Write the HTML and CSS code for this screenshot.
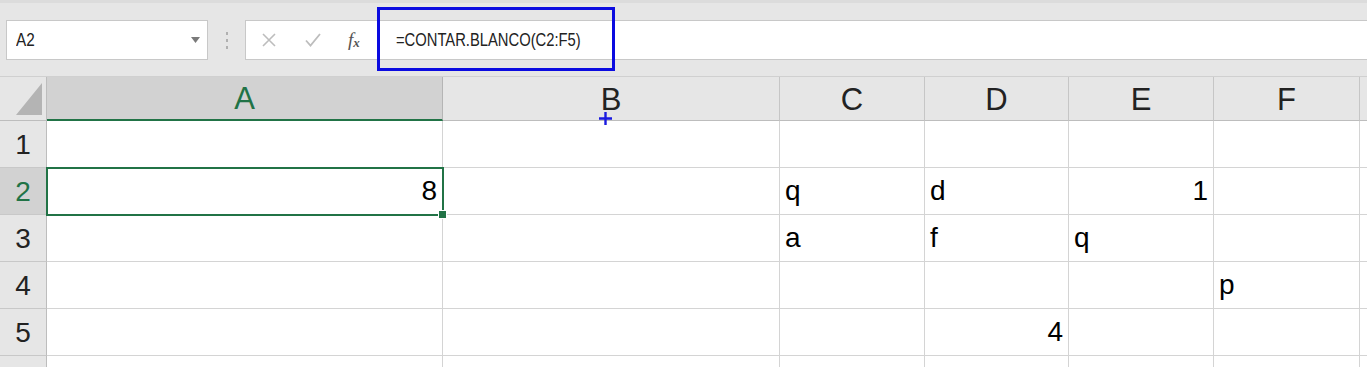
FILE: index.html
```html
<!DOCTYPE html>
<html>
<head>
<meta charset="utf-8">
<link rel="stylesheet" href="styles.css">
</head>
<body>
<div class="app">
  <div class="toolbar">
    <div class="namebox">
      <span class="name">A2</span>
      <svg class="dd" width="9" height="6" viewBox="0 0 9 6"><path d="M0 0H9L4.5 6Z" fill="#7a7a7a"/></svg>
    </div>
    <div class="dots"><i></i><i></i><i></i></div>
    <div class="fbar">
      <div class="ficons">
        <svg width="14" height="14" viewBox="0 0 14 14"><path d="M1 1L13 13M13 1L1 13" stroke="#bdbdbd" stroke-width="1.6" fill="none"/></svg>
        <svg width="16" height="14" viewBox="0 0 16 14"><path d="M1 7.5L5.5 12.5L15 1" stroke="#bdbdbd" stroke-width="1.8" fill="none"/></svg>
        <span class="fx">f<sub>x</sub></span>
      </div>
      <div class="formula">=CONTAR.BLANCO(C2:F5)</div>
    </div>
    <div class="highlight"></div>
  </div>

  <div class="sheet">
    <div class="corner"><svg width="26" height="32" viewBox="0 0 26 32"><path d="M26 0V32H0Z" fill="#b4b4b4"/></svg></div>
    <div class="ch sel">A</div>
    <div class="ch">B</div>
    <div class="ch">C</div>
    <div class="ch">D</div>
    <div class="ch">E</div>
    <div class="ch">F</div>
    <div class="ch last"></div>

    <div class="rh">1</div>
    <div class="c"></div><div class="c"></div><div class="c"></div><div class="c"></div><div class="c"></div><div class="c"></div><div class="c"></div>

    <div class="rh sel">2</div>
    <div class="c num active">8<span class="handle"></span></div><div class="c"></div><div class="c">q</div><div class="c">d</div><div class="c num">1</div><div class="c"></div><div class="c"></div>

    <div class="rh">3</div>
    <div class="c"></div><div class="c"></div><div class="c">a</div><div class="c">f</div><div class="c">q</div><div class="c"></div><div class="c"></div>

    <div class="rh">4</div>
    <div class="c"></div><div class="c"></div><div class="c"></div><div class="c"></div><div class="c"></div><div class="c">p</div><div class="c"></div>

    <div class="rh">5</div>
    <div class="c"></div><div class="c"></div><div class="c"></div><div class="c num">4</div><div class="c"></div><div class="c"></div><div class="c"></div>

    <div class="rh"></div>
    <div class="c"></div><div class="c"></div><div class="c"></div><div class="c"></div><div class="c"></div><div class="c"></div><div class="c"></div>

    <svg class="cursor" width="13" height="13" viewBox="0 0 13 13"><path d="M6.5 0V13M0 6.5H13" stroke="#1a1ae0" stroke-width="2.4"/></svg>
  </div>
</div>
</body>
</html>
```
FILE: styles.css
```css
* { box-sizing: border-box; }
html, body { margin: 0; padding: 0; }
body {
  width: 1367px;
  height: 367px;
  overflow: hidden;
  background: #ffffff;
  font-family: "Liberation Sans", "DejaVu Sans", sans-serif;
  color: #000;
}
.app { position: relative; }

.toolbar {
  position: relative;
  height: 76px;
  background: #e6e6e6;
  border-top: 3px solid #dcdcdc;
  display: flex;
  align-items: flex-start;
  padding: 17px 0 0 6px;
}
.namebox {
  width: 202px;
  height: 40px;
  background: #fff;
  border: 1px solid #c8c8c8;
  display: flex;
  align-items: center;
  justify-content: space-between;
  padding: 0 7px 0 9px;
}
.name {
  font-size: 18px;
  color: #222;
  display: inline-block;
  transform: scaleX(0.85);
  transform-origin: left center;
}
.dots {
  width: 37px;
  height: 40px;
  display: flex;
  flex-direction: column;
  align-items: center;
  justify-content: center;
  gap: 4px;
}
.dots i { display: block; width: 2px; height: 3px; background: #b0b0b0; }
.fbar {
  flex: 1;
  height: 40px;
  background: #fff;
  border: 1px solid #c8c8c8;
  border-right: none;
  display: flex;
  align-items: center;
}
.ficons {
  width: 132px;
  height: 100%;
  display: flex;
  align-items: center;
  gap: 29px;
  padding-left: 16px;
  border-right: 1px solid #d8d8d8;
}
.fx {
  font-family: "Liberation Serif", "DejaVu Serif", serif;
  font-style: italic;
  font-size: 19px;
  color: #555;
  margin-left: -2px;
}
.fx sub { font-size: 13px; vertical-align: -1px; font-weight: bold; }
.formula {
  margin-left: 18px;
  font-size: 18px;
  color: #222;
  transform: scaleX(0.82);
  transform-origin: left center;
  white-space: nowrap;
}
.highlight {
  position: absolute;
  left: 377px;
  top: 4px;
  width: 238px;
  height: 64px;
  border: 3px solid #0b0be0;
}

.sheet {
  position: relative;
  display: grid;
  grid-template-columns: 47px 396px 337px 145px 144px 145px 146px 1fr;
  grid-template-rows: 44px repeat(6, 47px);
  border-top: 1px solid #d0d0d0;
}
.corner {
  background: #e6e6e6;
  border-right: 1px solid #bdbdbd;
  border-bottom: 1px solid #bdbdbd;
  display: flex;
  align-items: flex-end;
  justify-content: flex-end;
  padding: 0 4px 5px 0;
}
.corner svg { display: block; }
.ch {
  background: #e6e6e6;
  border-right: 1px solid #c6c6c6;
  border-bottom: 1px solid #bdbdbd;
  display: flex;
  align-items: center;
  justify-content: center;
  font-size: 31px;
  color: #222;
  padding-top: 2px;
}
.ch.sel {
  background: #d2d2d2;
  color: #217346;
  border-bottom: 2px solid #217346;
  border-right-color: #b5b5b5;
}
.ch.last { border-right: none; }
.rh {
  background: #e6e6e6;
  border-right: 1px solid #bdbdbd;
  border-bottom: 1px solid #c8c8c8;
  display: flex;
  align-items: center;
  justify-content: center;
  font-size: 28px;
  color: #222;
  padding-top: 2px;
}
.rh.sel {
  background: #d2d2d2;
  color: #217346;
}
.c {
  border-right: 1px solid #d4d4d4;
  border-bottom: 1px solid #d4d4d4;
  display: flex;
  align-items: flex-end;
  padding: 0 5px 7px 5px;
  font-size: 28px;
  line-height: 32px;
  position: relative;
}
.c.num { justify-content: flex-end; }
.c.active {
  outline: 2px solid #217346;
  outline-offset: -1px;
  z-index: 1;
}
.handle {
  position: absolute;
  right: -4px;
  bottom: -4px;
  width: 7px;
  height: 7px;
  background: #217346;
  border: 1px solid #fff;
  box-sizing: content-box;
  margin: -1px;
}
.cursor {
  position: absolute;
  left: 599px;
  top: 35px;
  z-index: 2;
}
```
